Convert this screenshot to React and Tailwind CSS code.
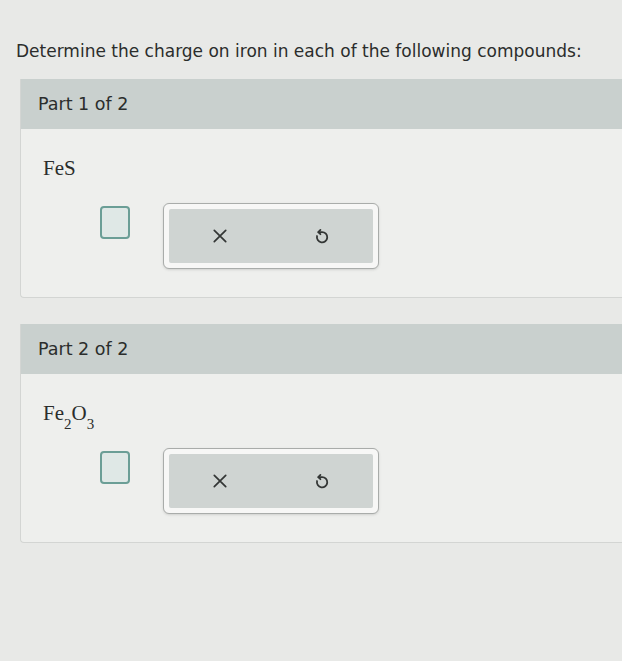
import React from "react";

function UndoIcon() {
  return (
    <svg width="16" height="18" viewBox="0 0 14 16" fill="none" stroke="#333635" strokeWidth="1.6" strokeLinecap="round" strokeLinejoin="round">
      <path d="M4 4.5 L7 4.5 A4.6 4.6 0 1 1 2.6 8" />
      <path d="M5.6 2.6 L3.6 4.5 L5.6 6.4" />
    </svg>
  );
}

function CloseIcon() {
  return (
    <svg width="16" height="16" viewBox="0 0 14 14" fill="none" stroke="#333635" strokeWidth="1.5" strokeLinecap="round">
      <path d="M2 2 L12 12 M12 2 L2 12" />
    </svg>
  );
}

function Part({ label, formula }) {
  return (
    <div className="ml-[20px] border-l border-b border-[#d3d5d3] rounded-bl-[4px] bg-[#eeefed]">
      <div className="h-[50px] flex items-center pl-[17px] bg-[#c9d0ce] text-[17.5px] text-[#2b2d2c]" style={{ fontFamily: '"DejaVu Sans", Verdana, sans-serif' }}>
        {label}
      </div>
      <div className="pt-[27px] pb-[28px] pl-[22px]">
        <div className="text-[21px] text-[#2b2d2c] h-[25px] leading-[25px]" style={{ fontFamily: '"Liberation Serif", "Times New Roman", serif' }}>
          {formula}
        </div>
        <div className="flex items-start mt-[22px] pl-[57px]">
          <div className="mt-[3px] w-[30px] h-[33px] border-2 border-[#6b9e96] rounded-[4px] bg-[#dfe8e6]" />
          <div className="ml-[33px] w-[216px] h-[66px] p-[5px] bg-[#f7f7f6] border border-[#a9acaa] rounded-[6px] shadow-sm">
            <div className="w-full h-full bg-[#cfd4d2] rounded-[2px] flex items-center">
              <div className="flex-1 flex justify-center"><CloseIcon /></div>
              <div className="flex-1 flex justify-center"><UndoIcon /></div>
            </div>
          </div>
        </div>
      </div>
    </div>
  );
}

export default function App() {
  return (
    <div className="min-h-[661px] bg-[#e8e9e7] pt-[40px]">
      <div className="pl-[16px] text-[17px] text-[#2b2d2c] leading-[23px]" style={{ fontFamily: '"DejaVu Sans", Verdana, sans-serif' }}>
        Determine the charge on iron in each of the following compounds:
      </div>
      <div className="mt-[16px]">
        <Part label="Part 1 of 2" formula="FeS" />
      </div>
      <div className="mt-[26px]">
        <Part
          label="Part 2 of 2"
          formula={
            <span>
              Fe<sub className="text-[15px] align-[-5px]">2</sub>O<sub className="text-[15px] align-[-5px]">3</sub>
            </span>
          }
        />
      </div>
    </div>
  );
}
